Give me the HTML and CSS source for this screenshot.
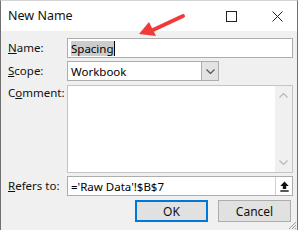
FILE: index.html
```html
<!DOCTYPE html>
<html lang="en">
<head>
  <meta charset="UTF-8" />
  <title>New Name</title>
  <link rel="stylesheet" href="styles.css">
</head>
<body>
<div class="dialog">
  <div class="titlebar">
    <span class="title">New Name</span>
    <span class="win-btn max-btn"><span class="max-box"></span></span>
    <span class="win-btn close-btn">
      <svg width="11" height="11" viewBox="0 0 11 11"><path d="M0.5 0.5L10.5 10.5M10.5 0.5L0.5 10.5" stroke="#222" stroke-width="1"/></svg>
    </span>
  </div>

  <div class="form">
    <div class="row row-name">
      <label class="lbl"><u>N</u>ame:</label>
      <div class="field text-field"><span class="sel">Spacing</span><span class="caret"></span></div>
    </div>
    <div class="row row-scope">
      <label class="lbl"><u>S</u>cope:</label>
      <div class="field combo">
        <span class="combo-text">Workbook</span>
        <span class="combo-btn">
          <svg width="9" height="5" viewBox="0 0 9 5"><path d="M0.5 0.5L4.5 4.5L8.5 0.5" fill="none" stroke="#555" stroke-width="1.2"/></svg>
        </span>
      </div>
    </div>
    <div class="row row-comment">
      <label class="lbl">C<u>o</u>mment:</label>
      <div class="field memo">
        <div class="memo-area"></div>
        <div class="scrollbar">
          <svg width="9" height="5" viewBox="0 0 9 5"><path d="M0.5 4.5L4.5 0.5L8.5 4.5" fill="none" stroke="#b8b8b8" stroke-width="1.2"/></svg>
          <svg width="9" height="5" viewBox="0 0 9 5"><path d="M0.5 0.5L4.5 4.5L8.5 0.5" fill="none" stroke="#b8b8b8" stroke-width="1.2"/></svg>
        </div>
      </div>
    </div>
    <div class="row row-refers">
      <label class="lbl"><u>R</u>efers to:</label>
      <div class="field refers">
        <span class="refers-text">='Raw Data'!$B$7</span>
        <span class="collapse-btn">
          <svg width="9" height="11" viewBox="0 0 9 11"><path d="M4.5 0.5L8.7 5H6.2V8H2.8V5H0.3Z" fill="#111"/><rect x="0.3" y="9.3" width="8.4" height="1.4" fill="#111"/></svg>
        </span>
      </div>
    </div>
    <div class="buttons">
      <button class="btn btn-default">OK</button>
      <button class="btn">Cancel</button>
    </div>
  </div>

  <svg class="grip" width="9" height="9" viewBox="0 0 9 9">
    <path d="M8 1L1 8M8 4L4 8M8 7L7 8" stroke="#9a9a9a" stroke-width="1"/>
  </svg>

  <!-- annotation arrow drawn over the title bar -->
  <svg class="annot-arrow" width="60" height="30" viewBox="0 0 60 30">
    <path d="M46 3L16 17" stroke="#f03a3a" stroke-width="4" stroke-linecap="round"/>
    <path d="M2 21L12 9L19 23Z" fill="#f03a3a"/>
  </svg>
</div>
</body>
</html>
```

FILE: styles.css
```css
html, body {
  margin: 0;
  padding: 0;
  background: #fff;
}
body {
  font-family: "Segoe UI", "Noto Sans", sans-serif;
  font-size: 11.5px;
  color: #000;
}
.dialog {
  position: relative;
  width: 298px;
  height: 230px;
  box-sizing: border-box;
  border-left: 1px solid #707070;
  border-right: 1px solid #707070;
  border-top: 1px solid #d4d4d4;
  background: #f0f0f0;
  overflow: hidden;
}
.titlebar {
  height: 30px;
  background: #fff;
  display: flex;
  align-items: center;
  padding-left: 7px;
  margin-right: -3px;
}
.title {
  flex: 1;
  font-size: 12.5px;
  color: #111;
  padding-bottom: 2px;
}
.win-btn {
  width: 46px;
  height: 30px;
  display: flex;
  align-items: center;
  justify-content: center;
}
.max-box {
  width: 9px;
  height: 9px;
  border: 1px solid #222;
}

/* form */
.form {
  padding: 7px 0 0 7px;
}
.row {
  display: flex;
  align-items: flex-start;
}
.lbl {
  width: 59px;
  flex: none;
  line-height: 19px;
  color: #111;
}
.field {
  box-sizing: border-box;
  background: #fff;
  border: 1px solid #adadad;
  height: 20px;
}
.text-field {
  width: 226px;
  display: flex;
  align-items: center;
  padding-left: 3px;
}
.sel {
  background: #cccccc;
  line-height: 15px;
}
.caret {
  width: 1px;
  height: 15px;
  background: #000;
}
.row-scope { margin-top: 3px; }
.combo {
  width: 152px;
  display: flex;
  align-items: center;
  padding-left: 3px;
}
.combo-text { flex: 1; }
.combo-btn {
  width: 17px;
  height: 18px;
  box-sizing: border-box;
  border-left: 1px solid #adadad;
  background: #e3e3e3;
  display: flex;
  align-items: center;
  justify-content: center;
}
.row-comment { margin-top: 4px; }
.row-comment .lbl { line-height: 15px; }
.memo {
  width: 226px;
  height: 88px;
  display: flex;
  border-color: #c4c4c4;
}
.memo-area { flex: 1; }
.scrollbar {
  width: 17px;
  background: #f0f0f0;
  display: flex;
  flex-direction: column;
  justify-content: space-between;
  align-items: center;
  padding: 7px 0 7px;
  box-sizing: border-box;
}
.row-refers { margin-top: 3px; }
.refers {
  width: 226px;
  display: flex;
  align-items: center;
  padding-left: 3px;
}
.refers-text { flex: 1; }
.collapse-btn {
  width: 17px;
  height: 18px;
  box-sizing: border-box;
  border-left: 1px solid #d0d0d0;
  background: #fff;
  display: flex;
  align-items: center;
  justify-content: center;
}
.buttons {
  display: flex;
  justify-content: flex-end;
  gap: 10px;
  width: 283px;
  margin-top: 4px;
}
.btn {
  width: 73px;
  height: 22px;
  box-sizing: border-box;
  border: 1px solid #adadad;
  background: #e1e1e1;
  font-family: "Segoe UI", "Noto Sans", sans-serif;
  font-size: 12px;
  color: #111;
  padding: 0;
}
.btn-default {
  border: 2px solid #0078d7;
}
.grip {
  position: absolute;
  right: 0;
  bottom: 0;
}
.annot-arrow {
  position: absolute;
  left: 136px;
  top: 12px;
}
```
